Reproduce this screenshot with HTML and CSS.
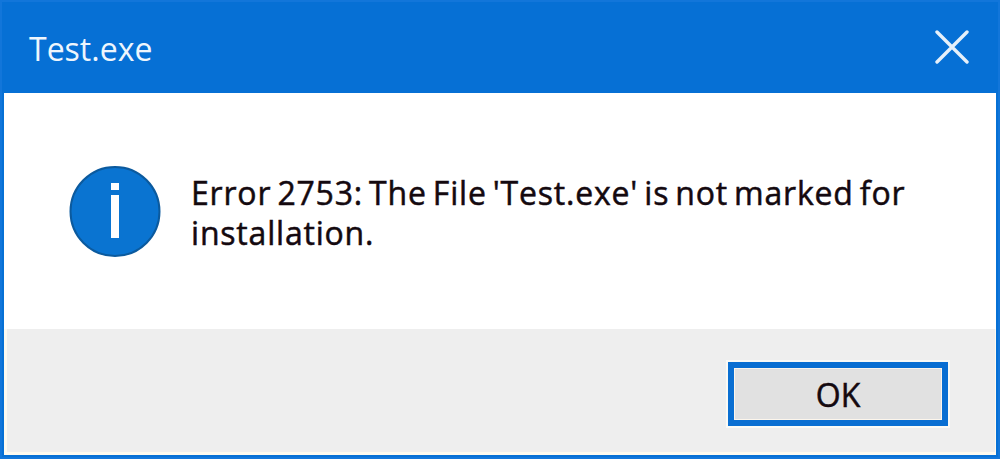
FILE: index.html
```html
<!DOCTYPE html>
<html lang="en">

<head>
    <meta charset="UTF-8">
    <meta name="viewport" content="width=device-width, initial-scale=1.0">
    <title>Test.exe</title>
    <link rel="stylesheet" href="styles.css">
</head>

<body>
    <div class="dialog">
        <div class="titlebar">
            <span class="title">Test.exe</span>
            <svg class="close" width="34" height="34" viewBox="0 0 34 34">
                <path d="M2 2L32 32M32 2L2 32" stroke="#e6f0fa" stroke-width="3.4" stroke-linecap="round" fill="none"/>
            </svg>
        </div>
        <div class="content">
            <svg class="icon" width="92" height="92" viewBox="0 0 92 92">
                <circle cx="46" cy="46.5" r="44.5" fill="#0a74d1" stroke="#0b5a9e" stroke-width="2"/>
                <rect x="42" y="18" width="8" height="7" fill="#fff"/>
                <rect x="42" y="30" width="8" height="43" fill="#fff"/>
            </svg>
            <p class="message">Error 2753: The File 'Test.exe' is not marked for installation.</p>
        </div>
        <div class="footer">
            <button class="ok">OK</button>
        </div>
    </div>
</body>

</html>
```

FILE: styles.css
```css
html, body {
    margin: 0;
    height: 100%;
}

body {
    font-family: "Open Sans", "Noto Sans", sans-serif;
    overflow: hidden;
}

.dialog {
    box-sizing: border-box;
    width: 1000px;
    height: 459px;
    display: flex;
    flex-direction: column;
    background-color: #0670d5;
    border: 2px solid #1276da;
    padding: 2px;
}

.titlebar {
    height: 89px;
    display: flex;
    align-items: center;
    justify-content: space-between;
    padding: 0 27px 0 25px;
}

.title {
    color: #eef6fd;
    font-size: 32px;
    margin-top: -1px;
}

.close {
    margin-top: -3px;
}

.content {
    height: 236px;
    background-color: #fff;
    display: flex;
    align-items: flex-start;
    padding: 72px 60px 0 65px;
    box-sizing: border-box;
}

.icon {
    flex-shrink: 0;
}

.message {
    margin: 8px 0 0 30px;
    font-size: 32px;
    line-height: 40px;
    letter-spacing: 0.8px;
    word-spacing: -3px;
    -webkit-text-stroke: 0.5px #14090f;
    color: #14090f;
}

.footer {
    flex: 1;
    background-color: #eeeeee;
    border-left: 3px solid #fdfaf0;
    border-right: 1px solid #fdfaf0;
    border-bottom: 3px solid #fdfaf0;
    display: flex;
    justify-content: flex-end;
    align-items: flex-start;
    padding: 33px 47px 0 0;
}

.ok {
    box-sizing: border-box;
    width: 220px;
    height: 64px;
    background-color: #e1e1e1;
    border: 6px solid #0a6fd2;
    outline: 1px solid #fdf6ec;
    outline-offset: -7px;
    box-shadow: 0 0 0 2px #fafaf6;
    font-family: inherit;
    font-size: 32px;
    -webkit-text-stroke: 0.5px #14090f;
    color: #14090f;
    padding: 0;
}
```
